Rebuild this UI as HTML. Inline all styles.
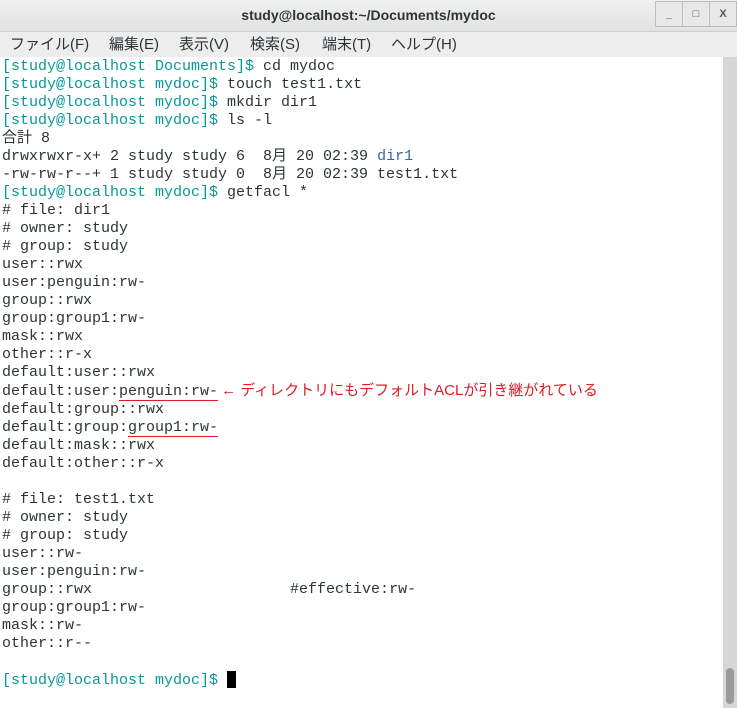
<!DOCTYPE html>
<html><head><meta charset="utf-8"><style>
body{margin:0;width:737px;height:708px;overflow:hidden;background:#fff;font-family:"Liberation Sans","Noto Sans CJK JP",sans-serif;position:relative}
#title{position:absolute;left:0;top:0;width:737px;height:31px;background:linear-gradient(#f0f0f0,#e2e2e2);border-bottom:1px solid #cfcfcf;text-align:center;line-height:31px;font-size:14px;font-weight:bold;color:#2e3436}
.btn{position:absolute;top:1px;width:26px;height:24px;border:1px solid #bbb;background:#e8e8e8;font-size:11px;line-height:24px;color:#555;font-weight:bold}
#menu{position:absolute;left:0;top:32px;height:25px;width:737px;background:#ededed;font-size:15px;color:#2e3436;line-height:25px}
#menu span{position:absolute;top:0}
#term{position:absolute;left:2px;top:58px;font-family:"Liberation Mono","Noto Sans CJK JP",monospace;font-size:15px;line-height:18px;white-space:pre;color:#2e3436}
.p{color:#06989a}.b{color:#3465a4}.r{color:#e01b24;font-family:"Liberation Sans","Noto Sans CJK JP",sans-serif;font-size:15px;margin-left:3px}
.u{border-bottom:1.5px solid #e01b24}
#sb{position:absolute;left:723px;top:57px;width:14px;height:651px;background:#d6d6d6}
#th{position:absolute;left:726px;top:668px;width:8px;height:36px;border-radius:4px;background:#9a9a9a}
.cur{display:inline-block;width:9px;height:17px;background:#000;vertical-align:-4px}
</style></head><body>
<div id="title">study@localhost:~/Documents/mydoc
<div class="btn" style="left:655px">_</div><div class="btn" style="left:682px">□</div><div class="btn" style="left:709px">X</div></div>
<div id="menu"><span style="left:10px">ファイル(F)</span><span style="left:109px">編集(E)</span><span style="left:179px">表示(V)</span><span style="left:250px">検索(S)</span><span style="left:322px">端末(T)</span><span style="left:391px">ヘルプ(H)</span></div>
<div id="term"><span class="p">[study@localhost Documents]$</span> cd mydoc
<span class="p">[study@localhost mydoc]$</span> touch test1.txt
<span class="p">[study@localhost mydoc]$</span> mkdir dir1
<span class="p">[study@localhost mydoc]$</span> ls -l
合計 8
drwxrwxr-x+ 2 study study 6  8月 20 02:39 <span class="b">dir1</span>
-rw-rw-r--+ 1 study study 0  8月 20 02:39 test1.txt
<span class="p">[study@localhost mydoc]$</span> getfacl *
# file: dir1
# owner: study
# group: study
user::rwx
user:penguin:rw-
group::rwx
group:group1:rw-
mask::rwx
other::r-x
default:user::rwx
default:user:<span class="u">penguin:rw-</span><span class="r">← ディレクトリにもデフォルトACLが引き継がれている</span>
default:group::rwx
default:group:<span class="u">group1:rw-</span>
default:mask::rwx
default:other::r-x

# file: test1.txt
# owner: study
# group: study
user::rw-
user:penguin:rw-
group::rwx                      #effective:rw-
group:group1:rw-
mask::rw-
other::r--

<span class="p">[study@localhost mydoc]$</span> <span class="cur"></span></div>
<div id="sb"></div><div id="th"></div>
</body></html>
